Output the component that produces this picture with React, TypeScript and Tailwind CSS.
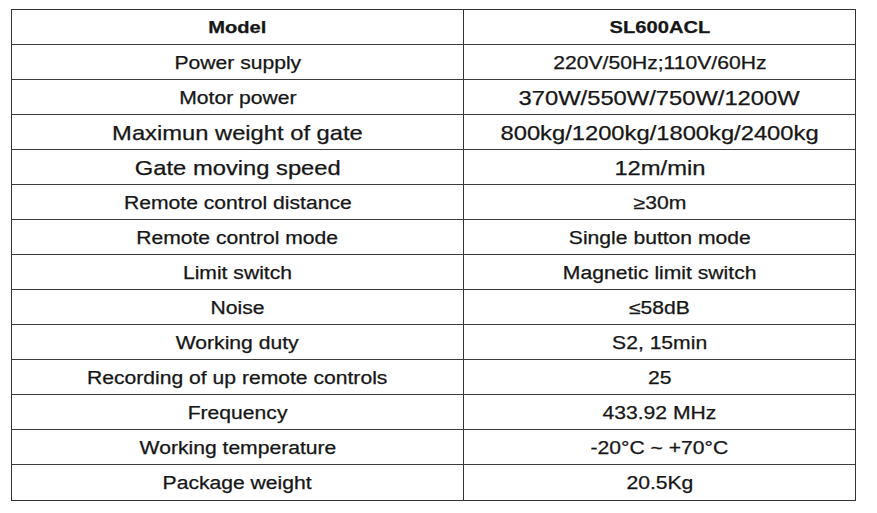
const rows: { label: string; value: string; big?: boolean; bold?: boolean }[] = [
  { label: "Model", value: "SL600ACL", bold: true },
  { label: "Power supply", value: "220V/50Hz;110V/60Hz" },
  { label: "Motor power", value: "370W/550W/750W/1200W", big: true },
  { label: "Maximun weight of gate", value: "800kg/1200kg/1800kg/2400kg", big: true },
  { label: "Gate moving speed", value: "12m/min", big: true },
  { label: "Remote control distance", value: "≥30m" },
  { label: "Remote control mode", value: "Single button mode" },
  { label: "Limit switch", value: "Magnetic limit switch" },
  { label: "Noise", value: "≤58dB" },
  { label: "Working duty", value: "S2, 15min" },
  { label: "Recording of up remote controls", value: "25" },
  { label: "Frequency", value: "433.92 MHz" },
  { label: "Working temperature", value: "-20°C ~ +70°C" },
  { label: "Package weight", value: "20.5Kg" },
];

function Cell({ text, big, bold }: { text: string; big?: boolean; bold?: boolean }) {
  return (
    <div className="flex items-center justify-center pt-[3px]">
      <span
        className={`inline-block scale-x-[1.2] whitespace-nowrap leading-none [-webkit-text-stroke:0.25px_#161616] ${
          bold ? "font-bold text-[16.8px]" : big ? "text-[19.8px]" : "text-[17.6px]"
        }`}
      >
        {text}
      </span>
    </div>
  );
}

export default function App() {
  return (
    <div
      className="w-[877px] h-[513px] bg-white pt-[9px] pl-[11px] text-[#161616]"
      style={{ fontFamily: '"Liberation Sans", Arial, sans-serif' }}
    >
      {/* Spec table */}
      <div className="w-[845px] border-[1.5px] border-[#333]">
        {rows.map((r, i) => (
          <div
            key={r.label}
            className={`grid grid-cols-[452px_1fr] h-[35px] ${
              i < rows.length - 1 ? "border-b-[1.5px] border-[#3c3c3c]" : ""
            }`}
          >
            <div className="border-r-[1.5px] border-[#333] flex justify-center">
              <Cell text={r.label} big={r.big && i !== 2} bold={r.bold} />
            </div>
            <Cell text={r.value} big={r.big} bold={r.bold} />
          </div>
        ))}
      </div>
    </div>
  );
}
